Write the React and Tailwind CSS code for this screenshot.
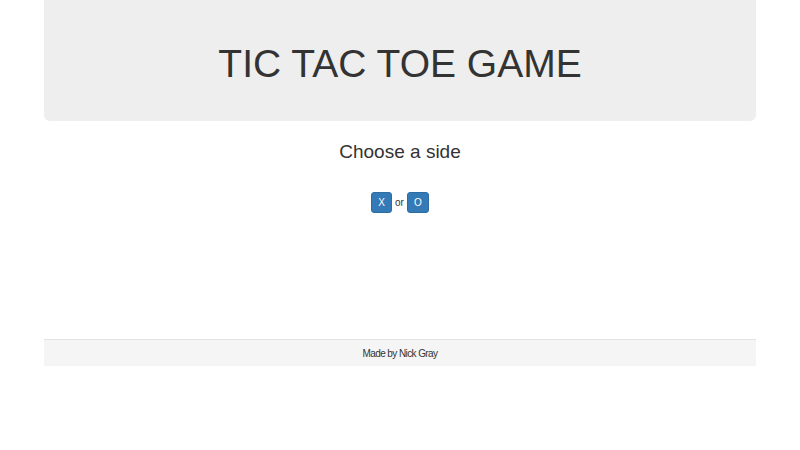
export default function App() {
  return (
    <div className="min-h-[450px] bg-white text-[#333] font-['Liberation_Sans',Arial,sans-serif]">
      <div className="mx-[44px]">
        {/* Header */}
        <div className="h-[121px] bg-[#eeeeee] rounded-b-[6px] flex items-center justify-center">
          <h1 className="text-[39px] leading-none pt-[6px]">TIC TAC TOE GAME</h1>
        </div>

        {/* Side chooser */}
        <div className="flex flex-col items-center">
          <h3 className="text-[19px] leading-none mt-[21px]">Choose a side</h3>
          <div className="flex items-center gap-[2px] mt-[31px]">
            <button className="w-[21px] h-[21px] bg-[#337ab7] text-white text-[10px] rounded-[3px] border border-[#2e6da4]">
              X
            </button>
            <span className="text-[10px] px-[1px]">or</span>
            <button className="w-[22px] h-[21px] bg-[#337ab7] text-white text-[10px] rounded-[3px] border border-[#2e6da4]">
              O
            </button>
          </div>
        </div>

        {/* Footer */}
        <div className="mt-[126px] h-[27px] bg-[#f5f5f5] border-t border-[#e3e3e3] flex items-center justify-center">
          <p className="text-[10px] tracking-[-0.6px]">Made by Nick Gray</p>
        </div>
      </div>
    </div>
  );
}
